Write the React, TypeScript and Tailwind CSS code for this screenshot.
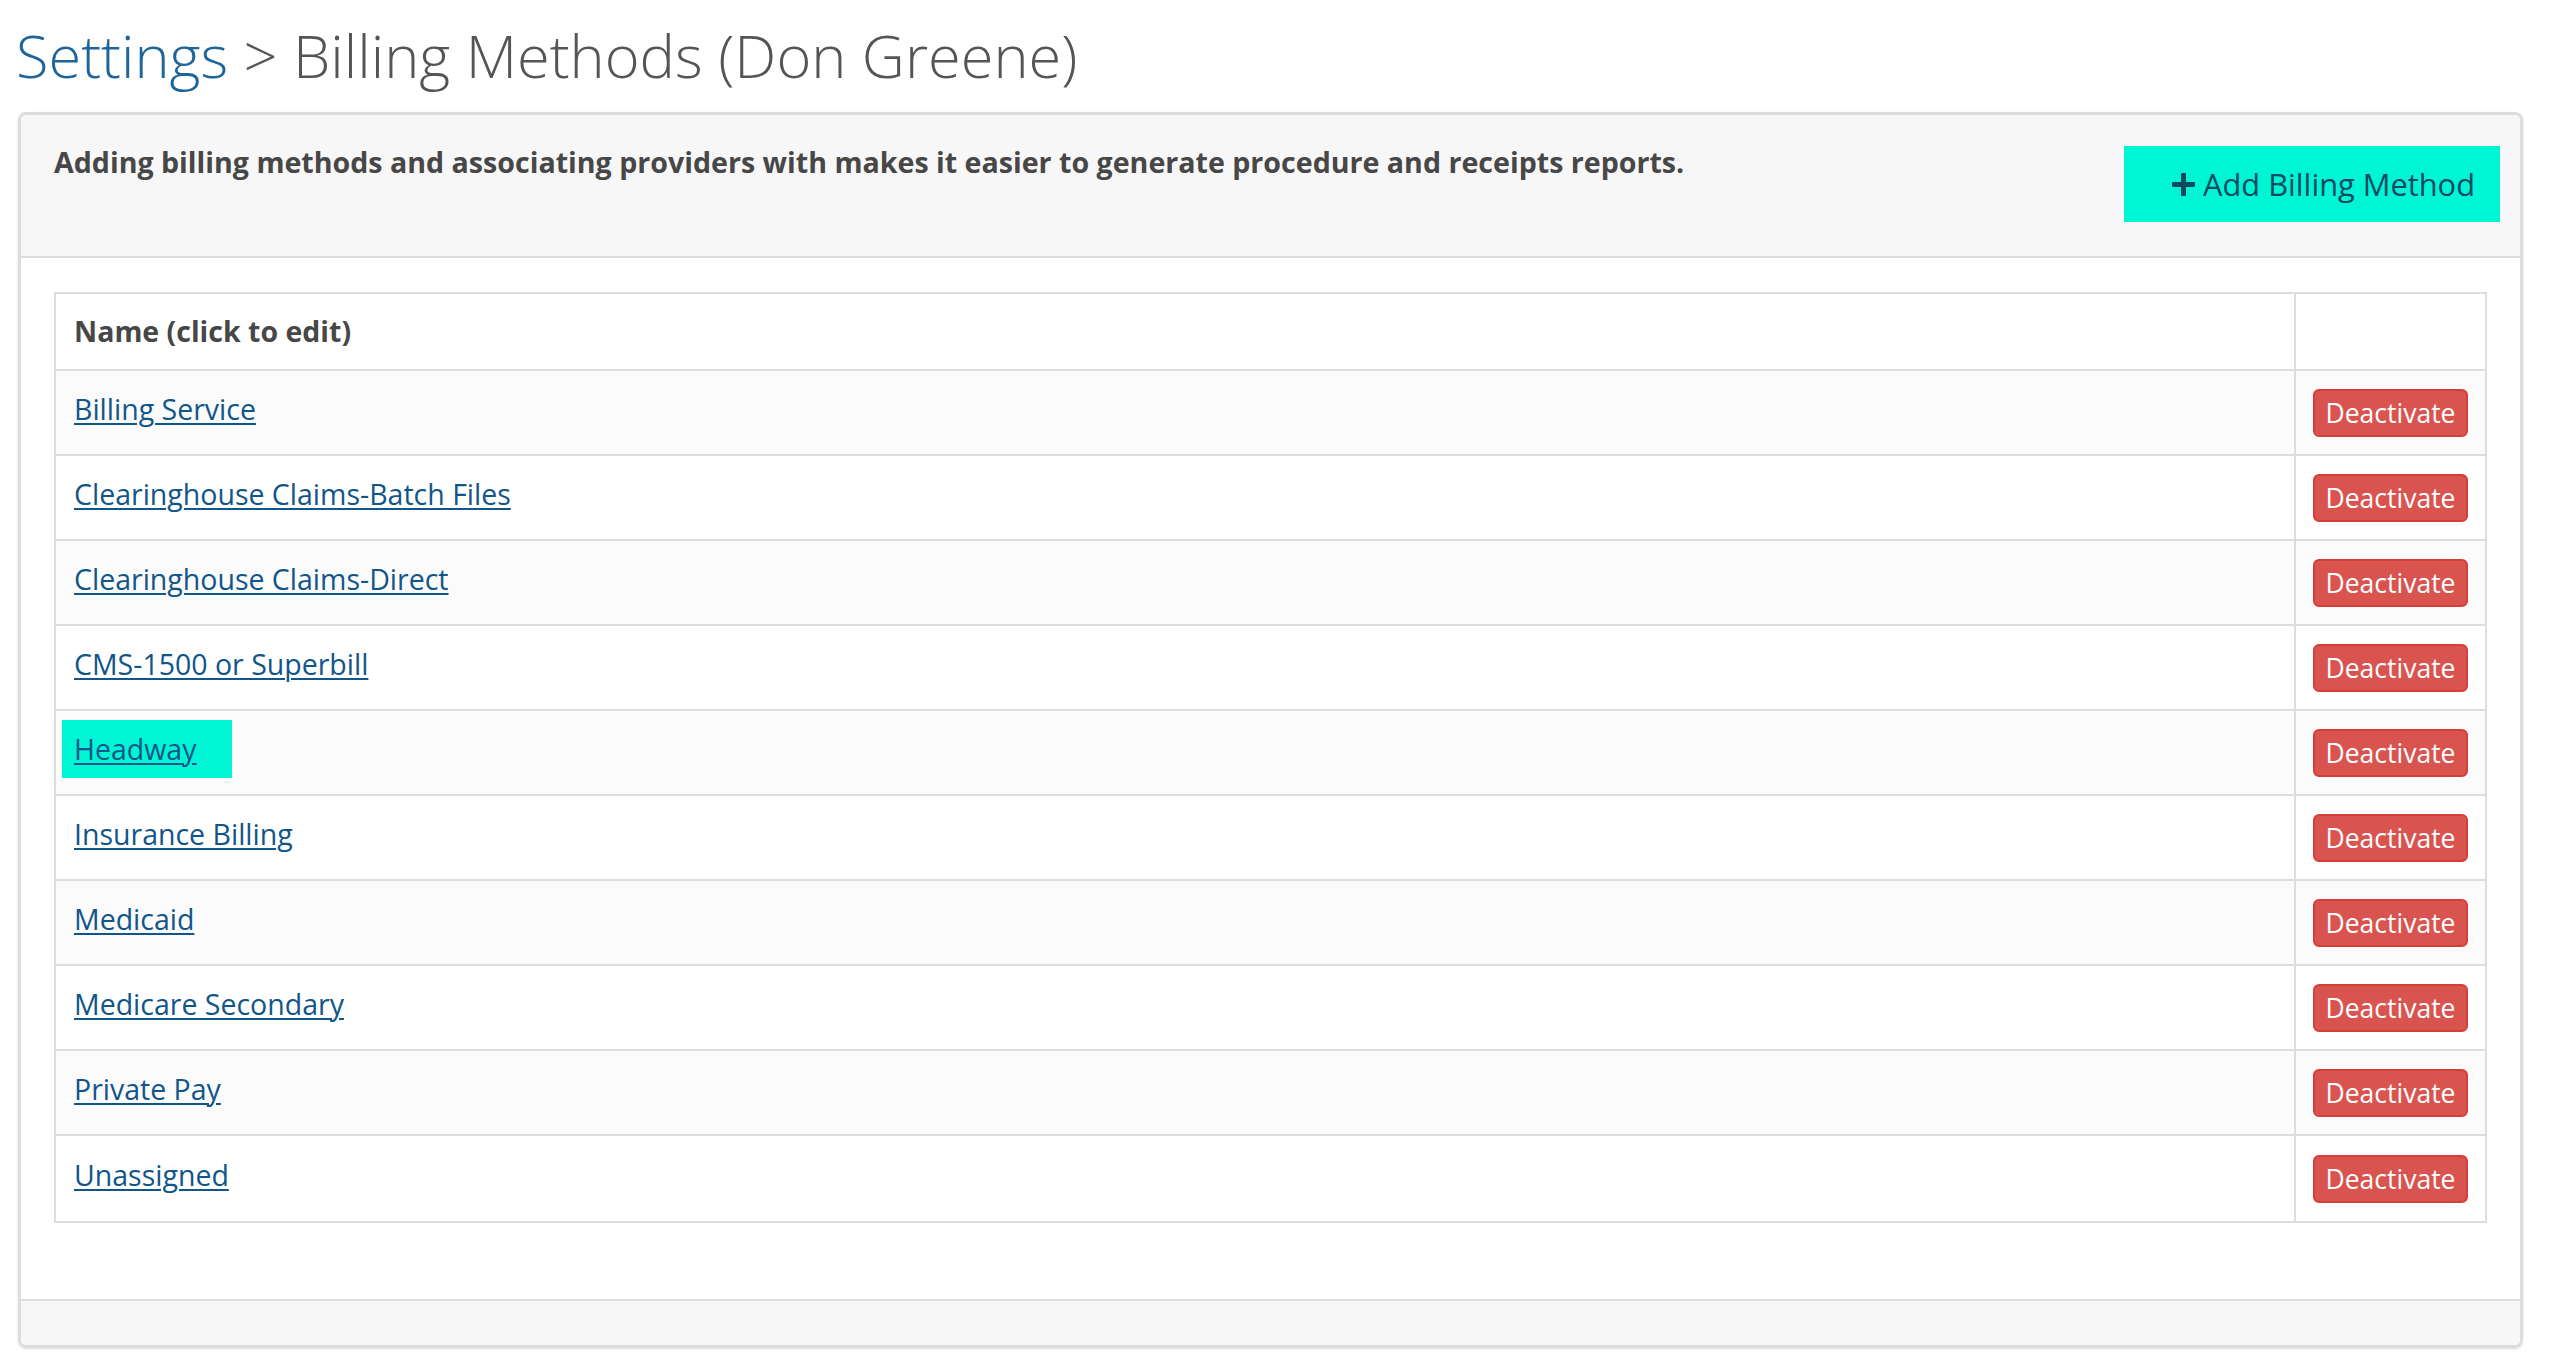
import React from "react";

const rows = [
  "Billing Service",
  "Clearinghouse Claims-Batch Files",
  "Clearinghouse Claims-Direct",
  "CMS-1500 or Superbill",
  "Headway",
  "Insurance Billing",
  "Medicaid",
  "Medicare Secondary",
  "Private Pay",
  "Unassigned",
];

function PlusIcon() {
  return (
    <svg width="23" height="23" viewBox="0 0 23 23" className="shrink-0">
      <rect x="9" y="0" width="5" height="23" rx="1" fill="#0b4a60" />
      <rect x="0" y="9" width="23" height="5" rx="1" fill="#0b4a60" />
    </svg>
  );
}

export default function App() {
  return (
    <div
      className="min-h-screen w-full bg-white"
      style={{ fontFamily: '"Open Sans", "Liberation Sans", sans-serif' }}
    >
      <h1 className="pl-[16px] pt-[23px] text-[59.5px] leading-[64px] font-light text-[#555555]">
        <span className="text-[#1d659a]">Settings</span> &gt; Billing Methods (Don Greene)
      </h1>

      <div className="ml-[18px] mr-[27px] mt-[25px] border-[3px] border-[#dddddd] rounded-[8px] overflow-hidden shadow-sm">
        <div className="flex items-start justify-between bg-[#f7f7f7] border-b-2 border-[#dddddd] pl-[33px] pr-[20px] pt-[27px] pb-[34px]">
          <p className="text-[28.6px] leading-[40px] font-bold text-[#474747]">
            Adding billing methods and associating providers with makes it easier to generate procedure and receipts reports.
          </p>
          <button className="mt-[4px] flex h-[76px] w-[376px] shrink-0 items-center gap-[8px] bg-[#00f5d4] pl-[48px] pr-[20px] text-[30.8px] text-[#0b4a60]">
            <PlusIcon />
            <span>Add Billing Method</span>
          </button>
        </div>

        <div className="bg-white px-[33px] pt-[34px] pb-[76px]">
          <div className="border-2 border-[#dddddd]">
            <div className="flex h-[77px] border-b-2 border-[#dddddd]">
              <div className="flex flex-1 items-center border-r-2 border-[#dddddd] pl-[18px] text-[28.5px] font-bold text-[#474747]">
                Name (click to edit)
              </div>
              <div className="w-[189px]" />
            </div>
            {rows.map((name, i) => (
              <div
                key={name}
                className={
                  "flex h-[85px] border-[#dddddd] " +
                  (i < rows.length - 1 ? "border-b-2 " : "") +
                  (i % 2 === 0 ? "bg-[#fbfbfb]" : "bg-white")
                }
              >
                <div className="relative flex flex-1 items-center border-r-2 border-[#dddddd] pl-[18px] pb-[8px]">
                  {name === "Headway" && (
                    <div className="absolute left-[6px] top-[9px] h-[58px] w-[170px] bg-[#00f5d4]" />
                  )}
                  <a
                    href="#"
                    className="relative text-[28.5px] leading-[40px] text-[#11568a] underline decoration-[2px] underline-offset-[3px]"
                  >
                    {name}
                  </a>
                </div>
                <div className="flex w-[189px] items-center justify-center">
                  <button className="h-[48px] w-[155px] rounded-[6px] border-2 border-[#d43f3a] bg-[#d9534f] text-[26.5px] leading-[40px] text-white">
                    Deactivate
                  </button>
                </div>
              </div>
            ))}
          </div>
        </div>

        <div className="h-[46px] border-t-2 border-[#dddddd] bg-[#f7f7f7]" />
      </div>
    </div>
  );
}
